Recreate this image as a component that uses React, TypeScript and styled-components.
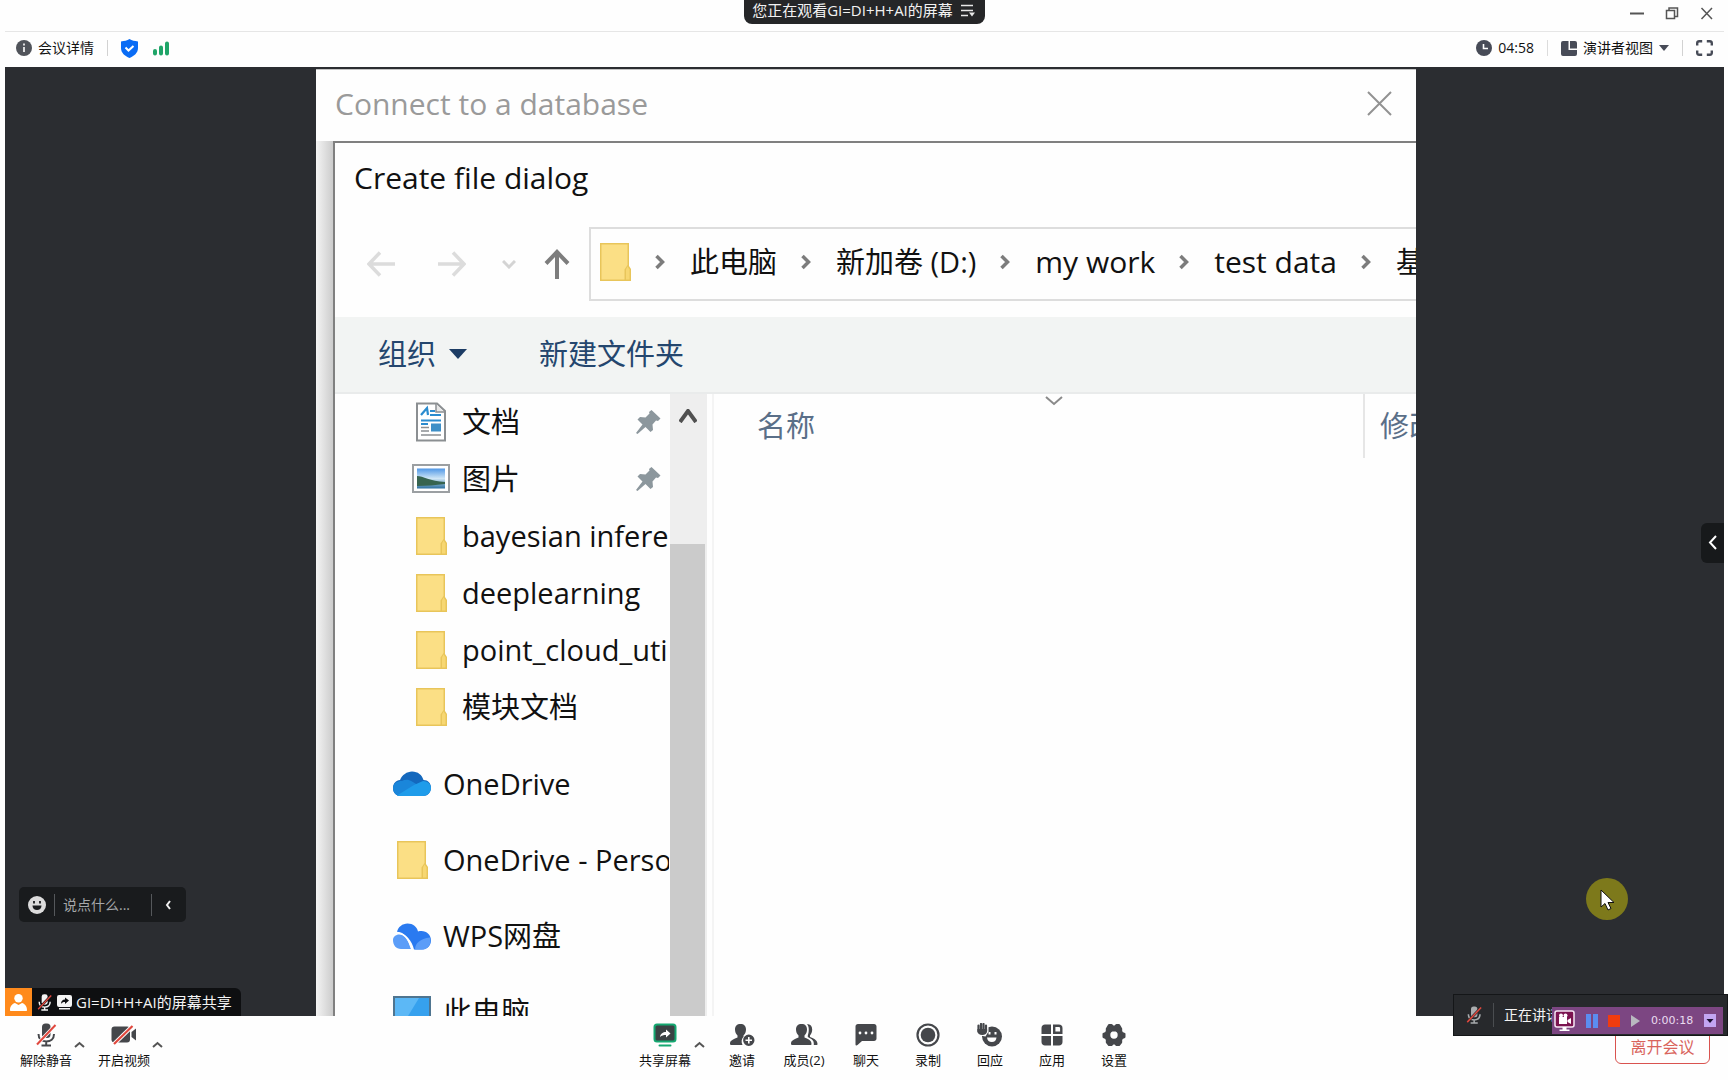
import React from "react";
import styled, { createGlobalStyle } from "styled-components";

const GlobalStyle = createGlobalStyle`
  * { box-sizing: border-box; }
  body {
    margin: 0;
    background: #fefefe;
    color: #111;
    font: 14px/20px "Open Sans", "Noto Sans CJK SC", sans-serif;
  }
  button, input {
    font: inherit;
    color: inherit;
    background: none;
    border: 0;
    padding: 0;
    margin: 0;
  }
  svg { display: block; flex: none; }
  ul { list-style: none; margin: 0; padding: 0; }
`;

/* ---------- shell ---------- */

const Page = styled.div`
  position: relative;
  display: flex;
  flex-direction: column;
  height: 100vh;
  padding: 0 4px 0 5px;
  overflow: hidden;
`;

const TitleBar = styled.header`
  display: grid;
  grid-template-columns: 1fr auto 1fr;
  align-items: start;
  height: 32px;
  border-bottom: 1px solid #e6e6e6;
`;

const WatchingPill = styled.button`
  grid-column: 2;
  display: flex;
  align-items: center;
  gap: 8px;
  height: 24px;
  padding: 0 10px 4px 8px;
  border-radius: 0 0 8px 8px;
  background: #252628;
  color: #f2f2f2;
  font-size: 15px;
  white-space: nowrap;
`;

const WindowControls = styled.div`
  display: flex;
  justify-content: flex-end;
  gap: 21px;
  padding: 6px 10px 0 0;
`;

const IconButton = styled.button`
  display: flex;
  align-items: center;
  justify-content: center;
`;

const InfoBar = styled.nav`
  display: flex;
  justify-content: space-between;
  align-items: center;
  height: 35px;
  padding: 0 11px 3px;
`;

const BarGroup = styled.div<{ $gap: number }>`
  display: flex;
  align-items: center;
  gap: ${(p) => p.$gap}px;
`;

const BarButton = styled.button`
  display: flex;
  align-items: center;
  gap: 6px;
`;

const Divider = styled.span<{ $color: string; $height: number }>`
  flex: none;
  width: 1px;
  height: ${(p) => p.$height}px;
  background: ${(p) => p.$color};
`;

/* ---------- stage ---------- */

const Stage = styled.main`
  position: relative;
  flex: 1;
  min-height: 0;
  display: grid;
  grid-template-columns: 311fr 1100fr 308fr;
  grid-template-rows: minmax(0, 1fr);
  padding-top: 2px;
  background: #2b2d31;
`;

const SharedScreen = styled.section`
  grid-column: 2;
  display: flex;
  flex-direction: column;
  min-width: 0;
  overflow: hidden;
  background: #fefefe;
  border-top: 1px solid #c4c4c4;
  font-size: 29px;
  line-height: 40px;
  white-space: nowrap;
`;

const ConnectHeader = styled.div`
  display: flex;
  flex: none;
  align-items: center;
  justify-content: space-between;
  height: 71px;
  padding: 0 24px 4px 19px;
  color: #9a9a9a;
  font-size: 30px;
`;

const DialogFrame = styled.div`
  flex: 1;
  min-height: 0;
  padding-left: 17px;
  display: flex;
  background: linear-gradient(to right, #f4f4f4, #cccccc 17px);
`;

const FileDialog = styled.div`
  flex: 1;
  min-width: 0;
  display: flex;
  flex-direction: column;
  background: #fefefe;
  border: solid #808080;
  border-width: 2px 0 0 2px;
`;

const DialogTitle = styled.h1`
  flex: none;
  margin: 0;
  padding: 15px 19px 0;
  height: 84px;
  font-size: 30px;
  line-height: 40px;
  font-weight: 400;
`;

const NavRow = styled.div`
  display: flex;
  flex: none;
  height: 74px;
  padding-left: 32px;
`;

const NavButtons = styled.div`
  display: grid;
  grid-template-columns: 71px 64px 42px 45px;
  flex: none;
`;

const NavButton = styled.button`
  display: flex;
  align-items: center;
`;

const AddressBar = styled.div`
  flex: 1;
  display: flex;
  align-items: center;
  gap: 24px;
  min-width: 0;
  overflow: hidden;
  padding: 0 0 4px 8px;
  border: solid #dddddd;
  border-width: 2px 0 2px 2px;
`;

const Crumb = styled.button<{ $latin: boolean }>`
  flex: none;
  font-size: ${(p) => (p.$latin ? 30 : 29)}px;
`;

const CommandBar = styled.div`
  display: flex;
  flex: none;
  align-items: center;
  gap: 72px;
  height: 77px;
  margin-top: 16px;
  padding: 0 0 2px 43px;
  background: #f2f4f3;
  border-bottom: 2px solid #e9ebeb;
  color: #24466e;
`;

const Command = styled.button`
  display: flex;
  align-items: center;
  gap: 13px;
`;

const DialogBody = styled.div`
  flex: 1;
  min-height: 0;
  display: grid;
  grid-template-columns: 335px 37px minmax(0, 1fr);
  grid-template-rows: minmax(0, 1fr);
`;

const FolderTree = styled.div`
  overflow: hidden;
  padding-right: 1px;
`;

const TreeGroup = styled.ul<{ $indent: number; $row: number }>`
  padding-left: ${(p) => p.$indent}px;
  & + & { margin-top: 11px; }
  li {
    display: grid;
    grid-template-columns: 40px minmax(0, 1fr) auto;
    align-items: center;
    height: ${(p) => p.$row}px;
    padding-bottom: 2px;
  }
  li > svg { justify-self: center; }
`;

const TreeLabel = styled.button`
  overflow: hidden;
  padding-left: 11px;
  text-align: left;
`;

const PinSlot = styled.span`
  padding-right: 8px;
`;

const ScrollTrack = styled.div`
  display: flex;
  flex-direction: column;
  align-items: center;
  padding-right: 2px;
  background: #eeeeee;
`;

const ScrollUp = styled(IconButton)`
  height: 44px;
  margin-bottom: 106px;
`;

const ScrollThumb = styled.div`
  flex: 1;
  align-self: stretch;
  background: #cbcbcb;
`;

const FilePane = styled.div`
  margin-left: 5px;
  border-left: 2px solid #f4f4f4;
  overflow: hidden;
`;

const FileTable = styled.table`
  table-layout: fixed;
  width: 100%;
  border-collapse: collapse;
  color: #5a6f88;
  th {
    position: relative;
    height: 64px;
    padding: 0 0 0 43px;
    font-weight: 400;
    text-align: left;
    overflow: hidden;
  }
  th + th {
    width: 52px;
    padding-left: 15px;
    border-left: 2px solid #e6e6e6;
  }
`;

const SortMark = styled.span`
  position: absolute;
  top: 2px;
  left: 51%;
`;

/* ---------- overlays on the stage ---------- */

const CommentBox = styled.div`
  position: absolute;
  left: 14px;
  bottom: 94px;
  display: flex;
  align-items: center;
  width: 167px;
  height: 35px;
  padding: 0 15px 0 9px;
  gap: 8px;
  border-radius: 5px;
  background: #191b1d;
  color: #a6a8aa;
  input {
    flex: 1;
    min-width: 0;
    outline: 0;
  }
  input::placeholder { color: #a6a8aa; opacity: 1; }
  button { padding-left: 5px; }
`;

const ShareTag = styled.div`
  position: absolute;
  left: 0;
  bottom: 0;
  display: flex;
  align-items: center;
  gap: 4px;
  height: 28px;
  padding-right: 9px;
  border-radius: 0 6px 0 0;
  overflow: hidden;
  background: #0e0f11;
  color: #f4f4f4;
  font-size: 15px;
  white-space: nowrap;
`;

const Avatar = styled.span`
  display: flex;
  align-items: center;
  justify-content: center;
  width: 27px;
  height: 28px;
  background: #ff8a1c;
`;

const PanelHandle = styled(IconButton)`
  position: absolute;
  right: 0;
  top: 48%;
  width: 23px;
  height: 40px;
  border-radius: 6px 0 0 6px;
  background: #17191b;
`;

const Pointer = styled.div`
  position: absolute;
  right: 96px;
  bottom: 96px;
  display: flex;
  width: 42px;
  height: 42px;
  padding: 11px 0 0 14px;
  border-radius: 50%;
  background: #7d791b;
`;

/* ---------- bottom bar ---------- */

const BottomBar = styled.footer`
  flex: none;
  display: grid;
  grid-template-columns: 631fr auto 579fr;
  height: 64px;
  font-size: 13px;
  line-height: 18px;
`;

const ToolGroup = styled.div<{ $pad: number }>`
  display: flex;
  align-items: flex-start;
  padding: 7px 0 0 ${(p) => p.$pad}px;
`;

const Tool = styled.button<{ $width: number }>`
  display: flex;
  flex-direction: column;
  align-items: center;
  gap: 4px;
  width: ${(p) => p.$width}px;
  color: #111;
  white-space: nowrap;
`;

const Caret = styled(IconButton)<{ $after: number }>`
  height: 24px;
  margin: 9px ${(p) => p.$after}px 0 0;
`;

const LeaveSlot = styled.div`
  display: flex;
  justify-content: flex-end;
  align-items: flex-start;
  padding: 14px 14px 0 0;
`;

const LeaveButton = styled.button`
  height: 34px;
  width: 95px;
  border: 1px solid #d9534f;
  border-radius: 6px;
  color: #d9645c;
  font-size: 16px;
`;

const SpeakerBar = styled.aside`
  position: absolute;
  right: 0;
  bottom: 44px;
  display: flex;
  align-items: center;
  gap: 10px;
  width: 275px;
  height: 42px;
  padding: 0 4px 0 11px;
  border: 1px solid #141618;
  background: #27292c;
  color: #f4f4f4;
`;

const SpeakerText = styled.span`
  flex: 1;
  min-width: 0;
  overflow: hidden;
  white-space: nowrap;
`;

const Recorder = styled.div`
  display: flex;
  align-items: center;
  justify-content: space-between;
  width: 171px;
  height: 27px;
  margin: 11px 0 0 -10px;
  padding: 0 7px 0 2px;
  background: #7c4682;
  color: #eadcf0;
  font: 11px/16px "DejaVu Sans", sans-serif;
`;

/* ---------- icons ---------- */

const INK = "#45474b";

const Folder = () => (
  <svg width="32" height="40" viewBox="0 0 32 40">
    <path d="M1 1h29v23l2 3v12H1z" fill="#e8c55a" />
    <path d="M2.500 2.500h26V23l-3 4.500v10h-23z" fill="#fbdf85" />
    <path d="M27 27.500l1.500-3 2 3v10H27z" fill="#f7d772" />
  </svg>
);

const DocIcon = () => (
  <svg width="30" height="40" viewBox="0 0 30 40">
    <path d="M1 1.500h20l8 7.500v29.500H1z" fill="#fff" stroke="#8b8f92" strokeWidth="2" />
    <path d="M20 2v8h8" fill="#e8e8e8" stroke="#8b8f92" strokeWidth="1.500" />
    <path d="M5 13l6-7 1 7M14 9h5M14 13h11M5 18.500h20M5 22h7" stroke="#2b8ccf" strokeWidth="2.200" fill="none" />
    <path d="M15 21.500h10v8H15z" fill="#3d8fc7" />
    <path d="M5 25.500h8M5 29h8M5 33h20" stroke="#8b8f92" strokeWidth="1.500" />
  </svg>
);

const PictureIcon = () => (
  <svg width="38" height="29" viewBox="0 0 38 29">
    <defs>
      <linearGradient id="sky" x1="0" y1="0" x2="0" y2="1">
        <stop offset="0" stopColor="#4f97e6" />
        <stop offset="0.500" stopColor="#cfe6f6" />
        <stop offset="1" stopColor="#2c6f9e" />
      </linearGradient>
    </defs>
    <path d="M1 1h36v27H1z" fill="#fff" stroke="#9b9fa2" strokeWidth="2" />
    <path d="M5 4.500h28v20H5z" fill="url(#sky)" />
    <path d="M5 12c6 0 13 5 28 6v2c-10 1-18 2-28 2z" fill="#37644f" />
  </svg>
);

const Pin = () => (
  <svg width="25" height="25" viewBox="0 0 25 25" fill="#8c979d">
    <path d="M15.500 1l9 8.500-2.500 2.500-2-.5-3.500 4 .5 5.500-2.500 2-5-5L1.500 25 0 24l6.500-8.500-5-5 2.500-2.500 5.500.5 4-4-.5-1.500z" />
  </svg>
);

const OneDriveCloud = () => (
  <svg width="38" height="26" viewBox="0 0 38 26">
    <path d="M8 25C3 25 0 21.500 0 17S3 9.500 7 9c2-5 7-8.500 12-8.500 6 0 10 3.500 11.500 8.500 4.500 0 7.500 3.500 7.500 7.500 0 5-3.500 8.500-8 8.500z" fill="#1468bd" />
    <path d="M9 10c3-2 7-1.500 10 .5l11 6.500-6 8H8C3 25 0 21.500 0 17S4 10 9 10z" fill="#1a86da" />
    <path d="M4 24.500L21 14l9-4c4.500 0 8 3 8 7s-3.500 8-8 8H9c-2 0-4 0-5-.5z" fill="#1f9cea" />
  </svg>
);

const WpsCloud = () => (
  <svg width="38" height="27" viewBox="0 0 38 27">
    <path d="M4 9C5 4 9.500.5 14.500.5 20 .5 24 4 25 8.500c7-2 13 2.500 13 9 0 5-4 9-9 9h-8C19 18 13 10 4 9z" fill="#2a7af0" />
    <path d="M0 17c0-5 7-8 12-3 3 3 4 7 6 12H8c-5 0-8-4-8-9z" fill="#5b9df8" />
    <path d="M22 26.500c0-6 5-11 15-12 2 6-2 12-8 12z" fill="#5b9df8" />
    <path d="M3 9.500c8 0 13 6 16 17" fill="none" stroke="#fff" strokeWidth="1.500" />
  </svg>
);

const Monitor = () => (
  <svg width="38" height="32" viewBox="0 0 38 32">
    <path d="M1 1h36v25H1z" fill="#36a1ee" stroke="#4f7590" strokeWidth="2" />
    <path d="M2 2h24L12 25H2z" fill="#5cb8f6" />
    <path d="M10 29h18v2H10z" fill="#6d8290" />
  </svg>
);

const CrumbChevron = () => (
  <svg width="11" height="16" viewBox="0 0 11 16" fill="none" stroke="#7c7c7c" strokeWidth="3.500">
    <path d="M1.500 2L7.500 8l-6 6" />
  </svg>
);

const Arrow = ({ left }: { left?: boolean }) => (
  <svg width="28" height="26" viewBox="0 0 28 26" fill="none" stroke="#dcdcdc" strokeWidth="3.500">
    {left ? <path d="M28 13H2M13 1.500L2 13l11 11.500" /> : <path d="M0 13h26M15 1.500L26 13 15 24.500" />}
  </svg>
);

const Chevron = ({ dir, w, h, color, stroke = 2 }: { dir: "up" | "down" | "left"; w: number; h: number; color: string; stroke?: number }) => {
  const d =
    dir === "up"
      ? `M1 ${h - 1}L${w / 2} 2L${w - 1} ${h - 1}`
      : dir === "down"
        ? `M1 1L${w / 2} ${h - 2}L${w - 1} 1`
        : `M${w - 1} 1L2 ${h / 2}L${w - 1} ${h - 1}`;
  return (
    <svg width={w} height={h} viewBox={`0 0 ${w} ${h}`} fill="none" stroke={color} strokeWidth={stroke}>
      <path d={d} />
    </svg>
  );
};

const Triangle = ({ w, h, color }: { w: number; h: number; color: string }) => (
  <svg width={w} height={h} viewBox={`0 0 ${w} ${h}`}>
    <path d={`M0 0h${w}L${w / 2} ${h}z`} fill={color} />
  </svg>
);

const MicOff = ({ size, color, halo }: { size: number; color: string; halo: string }) => (
  <svg width={size} height={size} viewBox="0 0 24 24" fill="none">
    <rect x="8" y="0.500" width="8.500" height="14.500" rx="3.500" fill={color} />
    <path d="M4.500 11c0 5 3.500 7.500 7.700 7.500S20 16 20 11M12.200 18.500V22M7.500 22.500h9.500" stroke={color} strokeWidth="2" />
    <path d="M3 21.500L21.500 2" stroke={halo} strokeWidth="3.500" />
    <path d="M3 21.500L21.500 2" stroke="#e0483e" strokeWidth="2" />
  </svg>
);

const CameraOff = () => (
  <svg width="26" height="24" viewBox="0 0 26 24" fill="none">
    <rect x="0.500" y="3.500" width="18.500" height="16" rx="3" fill={INK} />
    <path d="M20.500 9l4.500-3.500v12L20.500 14z" fill={INK} />
    <path d="M3 21L21.500 3" stroke="#fff" strokeWidth="4" />
    <path d="M3 21L21.500 3" stroke="#e0483e" strokeWidth="2.200" />
  </svg>
);

const ShareScreen = () => (
  <svg width="24" height="24" viewBox="0 0 24 24">
    <rect x="1.500" y="1.500" width="21" height="17" rx="2.500" fill="#3b4244" stroke="#14a871" strokeWidth="2" />
    <path d="M7 14c.5-3.500 3-5 6-5V6.500l4.500 4-4.500 4V12c-2.500 0-4.500.5-6 2z" fill="#fff" />
    <path d="M6.500 22.500h11" stroke="#14a871" strokeWidth="2" strokeLinecap="round" />
  </svg>
);

const Invite = () => (
  <svg width="25" height="24" viewBox="0 0 25 24" fill={INK}>
    <path d="M10.500 1c3.500 0 5.500 2 5.500 5.500 0 2.500-1 4.500-2.500 6v1.200c-2 2-2.500 5.500-1 8.300H1c-.8 0-1-.6-1-1.200 0-3 2-4 7.500-6.300v-2C6 11 5 9 5 6.500 5 3 7 1 10.500 1z" />
    <path d="M18.800 11.500a5.700 5.700 0 100 11.400 5.700 5.700 0 000-11.400zm-.8 2.500h1.600v2.400H22V18h-2.400v2.500H18V18h-2.500v-1.600H18z" fillRule="evenodd" />
  </svg>
);

const Members = () => (
  <svg width="27" height="24" viewBox="0 0 27 24" fill={INK}>
    <path d="M10.500 1c3.700 0 5.500 2 5.500 5.500 0 2.500-1 4.500-2.500 6v2c5.500 2.300 7 3.500 7 6.500 0 .6-.2 1-1 1H1c-.8 0-1-.6-1-1.200 0-3 2-4 7.500-6.300v-2C6 11 5 9 5 6.500 5 3 7 1 10.500 1z" />
    <path d="M16 1c3.500.2 5.200 2.200 5.200 5.500 0 2.500-1 4.500-2.200 6v1.500c5.500 2 7.500 4 7.500 7 0 .6-.2 1-1 1h-2.700c.3-4-1-5.500-6-8v-1.500C18 9 18.500 4 16 1z" />
  </svg>
);

const Chat = () => (
  <svg width="22" height="24" viewBox="0 0 22 24">
    <path d="M3 1h16c1.500 0 2.500 1 2.500 2.500v12c0 1.500-1 2.500-2.500 2.500H7l-4.500 4c-1 .8-2 .5-2-.8V3.500C.5 2 1.500 1 3 1z" fill={INK} />
    <g fill="#fff"><circle cx="5" cy="10" r="1.400" /><circle cx="11" cy="10" r="1.400" /><circle cx="17" cy="10" r="1.400" /></g>
  </svg>
);

const Record = () => (
  <svg width="24" height="24" viewBox="0 0 24 24">
    <circle cx="12" cy="12" r="10.500" fill="none" stroke={INK} strokeWidth="2.200" />
    <circle cx="12" cy="12" r="7.300" fill={INK} />
  </svg>
);

const Reaction = () => (
  <svg width="26" height="24" viewBox="0 0 26 24">
    <circle cx="15" cy="13.500" r="10" fill={INK} />
    <path d="M0 0h11.500v8.500L8.500 13.500 3 12.500 0 8z" fill="#fff" />
    <path d="M1.500 2.500v6M4 1v7M6.500 1V8M9 2.500V8" stroke={INK} strokeWidth="2.200" strokeLinecap="round" />
    <path d="M.4 6h9.700v2c0 2.500-2 4-4.800 4S.4 10.500.4 8z" fill={INK} />
    <path d="M10 14.500h9.500c-.3 3-2 4.500-4.700 4.500S10.300 17.500 10 14.500z" fill="#fff" />
    <path d="M12.500 9v2.500M18.500 9v2.500" stroke="#fff" strokeWidth="2" />
  </svg>
);

const Apps = () => (
  <svg width="22" height="24" viewBox="0 0 22 24" fill={INK}>
    <path d="M4 1.500h6v9.500H.5V5C.5 3 2 1.500 4 1.500zM.5 13H10v9.500H4c-2 0-3.500-1.500-3.500-3.500zM12 13h9.500v6c0 2-1.500 3.500-3.500 3.500h-6z" />
    <path d="M13.200 2.700h4.600c1.400 0 2.500 1.100 2.500 2.500v4.600h-7.100z" fill="none" stroke={INK} strokeWidth="2.400" />
  </svg>
);

const Gear = () => (
  <svg width="24" height="24" viewBox="0 0 24 24" fill={INK}>
    <path
      fillRule="evenodd"
      stroke={INK}
      strokeWidth="2"
      strokeLinejoin="round"
      d="M7 2h2.500L11 3.500h2L14.500 2H17l2.200 3.700v2.600l1 1.700 2.300 1v3L20.200 15l-1 1.700v2.600L17 22h-2.500L13 20.500h-2L9.500 22H7l-2.200-2.700v-2.600l-1-1.700-2.300-1v-3l2.300-1 1-1.700V5.700zM12 7.300a4.700 4.700 0 100 9.400 4.700 4.700 0 000-9.400z"
    />
  </svg>
);

const tools: { label: string; icon: React.ReactNode }[] = [
  { label: "邀请", icon: <Invite /> },
  { label: "成员(2)", icon: <Members /> },
  { label: "聊天", icon: <Chat /> },
  { label: "录制", icon: <Record /> },
  { label: "回应", icon: <Reaction /> },
  { label: "应用", icon: <Apps /> },
  { label: "设置", icon: <Gear /> },
];

const quickAccess: { label: string; icon: React.ReactNode; pinned?: boolean }[] = [
  { label: "文档", icon: <DocIcon />, pinned: true },
  { label: "图片", icon: <PictureIcon />, pinned: true },
  { label: "bayesian infere", icon: <Folder /> },
  { label: "deeplearning", icon: <Folder /> },
  { label: "point_cloud_uti", icon: <Folder /> },
  { label: "模块文档", icon: <Folder /> },
];

const drives: { label: string; icon: React.ReactNode }[] = [
  { label: "OneDrive", icon: <OneDriveCloud /> },
  { label: "OneDrive - Perso", icon: <Folder /> },
  { label: "WPS网盘", icon: <WpsCloud /> },
  { label: "此电脑", icon: <Monitor /> },
];

const crumbs = [
  { label: "此电脑" },
  { label: "新加卷 (D:)" },
  { label: "my work", latin: true },
  { label: "test data", latin: true },
  { label: "基" },
];

export default function App() {
  return (
    <>
      <GlobalStyle />
      <Page>
        <TitleBar>
          <WatchingPill>
            您正在观看GI=DI+H+AI的屏幕
            <svg width="14" height="13" viewBox="0 0 14 13" stroke="#e8e8e8" strokeWidth="1.500">
              <path d="M0 1.500h12M0 6.500h12M0 11.500h7" />
              <path d="M8 8.500h6l-3 4z" fill="#e8e8e8" stroke="none" />
            </svg>
          </WatchingPill>
          <WindowControls>
            <IconButton aria-label="最小化">
              <svg width="14" height="14" viewBox="0 0 14 14"><path d="M0 7.500h14" stroke="#555" strokeWidth="2" /></svg>
            </IconButton>
            <IconButton aria-label="还原">
              <svg width="14" height="14" viewBox="0 0 14 14" fill="none" stroke="#555" strokeWidth="1.500">
                <path d="M1.500 4.500h8v8h-8zM4 4V2h8.500v8.500H10" />
              </svg>
            </IconButton>
            <IconButton aria-label="关闭">
              <svg width="14" height="14" viewBox="0 0 14 14"><path d="M1.500 2l10.500 11M12 2L1.500 13" stroke="#555" strokeWidth="1.500" /></svg>
            </IconButton>
          </WindowControls>
        </TitleBar>

        <InfoBar>
          <BarGroup $gap={13}>
            <BarButton>
              <svg width="16" height="16" viewBox="0 0 16 16">
                <circle cx="8" cy="8" r="8" fill="#50535a" />
                <path d="M8 3.500v2M8 7v5" stroke="#fff" strokeWidth="1.600" />
              </svg>
              会议详情
            </BarButton>
            <Divider $color="#d2d2d2" $height={16} />
            <IconButton aria-label="安全">
              <svg width="17" height="19" viewBox="0 0 17 19">
                <path d="M8.500 0c2.500 1.500 5 2 8.500 2.500V9c0 5-4 8-8.500 10C4 17 0 14 0 9V2.500C3.500 2 6 1.500 8.500 0z" fill="#0a6cf5" />
                <path d="M4.500 8.500l3 3 5-4.500" fill="none" stroke="#fff" strokeWidth="2" />
              </svg>
            </IconButton>
            <IconButton aria-label="网络">
              <svg width="19" height="15" viewBox="0 0 19 15" stroke="#1fa568" strokeWidth="4" strokeLinecap="round">
                <path d="M4 10v2.500M10 6.500v6M16 2.500v10" />
              </svg>
            </IconButton>
          </BarGroup>
          <BarGroup $gap={13}>
            <BarButton>
              <svg width="16" height="16" viewBox="0 0 16 16">
                <circle cx="8" cy="8" r="8" fill="#474b57" />
                <path d="M7.500 4v4.500H12" stroke="#fff" strokeWidth="1.600" fill="none" />
              </svg>
              04:58
            </BarButton>
            <Divider $color="#dcdcdc" $height={16} />
            <BarButton>
              <svg width="16" height="15" viewBox="0 0 16 15" fill="#474b57">
                <path d="M2 0h5.500v9H16v4a2 2 0 01-2 2H2a2 2 0 01-2-2V2a2 2 0 012-2zM9 0h5a2 2 0 012 2v5.500H9z" />
              </svg>
              演讲者视图
              <Triangle w={10} h={6} color="#474b57" />
            </BarButton>
            <Divider $color="#d2d2d2" $height={16} />
            <IconButton aria-label="全屏">
              <svg width="17" height="16" viewBox="0 0 17 16" fill="none" stroke="#474b57" strokeWidth="2.400">
                <path d="M1.200 5.500V3a2 2 0 012-1.800h3M10.800 1.200h3a2 2 0 012 1.800v2.500M15.800 10.500V13a2 2 0 01-2 1.800h-3M6.200 14.800h-3a2 2 0 01-2-1.800v-2.500" />
              </svg>
            </IconButton>
          </BarGroup>
        </InfoBar>

        <Stage>
          <SharedScreen>
            <ConnectHeader>
              Connect to a database
              <IconButton aria-label="Close">
                <svg width="25" height="25" viewBox="0 0 25 25"><path d="M1 1l23 23M24 1L1 24" stroke="#929292" strokeWidth="2" /></svg>
              </IconButton>
            </ConnectHeader>
            <DialogFrame>
              <FileDialog>
                <DialogTitle>Create file dialog</DialogTitle>
                <NavRow>
                  <NavButtons>
                    <NavButton aria-label="后退"><Arrow left /></NavButton>
                    <NavButton aria-label="前进"><Arrow /></NavButton>
                    <NavButton aria-label="最近"><Chevron dir="down" w={14} h={9} color="#d4d4d4" stroke={3} /></NavButton>
                    <NavButton aria-label="上移">
                      <svg width="26" height="30" viewBox="0 0 26 30" fill="none" stroke="#7d7d7d" strokeWidth="4"><path d="M13 30V3M2 14.500L13 3l11 11.500" /></svg>
                    </NavButton>
                  </NavButtons>
                  <AddressBar>
                    <Folder />
                    {crumbs.map((c) => (
                      <React.Fragment key={c.label}>
                        <CrumbChevron />
                        <Crumb $latin={!!c.latin}>{c.label}</Crumb>
                      </React.Fragment>
                    ))}
                  </AddressBar>
                </NavRow>
                <CommandBar>
                  <Command>组织<Triangle w={18} h={10} color="#1d3c64" /></Command>
                  <Command>新建文件夹</Command>
                </CommandBar>
                <DialogBody>
                  <FolderTree>
                    <TreeGroup $indent={76} $row={57}>
                      {quickAccess.map((f) => (
                        <li key={f.label}>
                          {f.icon}
                          <TreeLabel>{f.label}</TreeLabel>
                          {f.pinned && <PinSlot><Pin /></PinSlot>}
                        </li>
                      ))}
                    </TreeGroup>
                    <TreeGroup $indent={57} $row={76}>
                      {drives.map((f) => (
                        <li key={f.label}>
                          {f.icon}
                          <TreeLabel>{f.label}</TreeLabel>
                        </li>
                      ))}
                    </TreeGroup>
                  </FolderTree>
                  <ScrollTrack>
                    <ScrollUp aria-label="向上滚动"><Chevron dir="up" w={18} h={14} color="#505050" stroke={4} /></ScrollUp>
                    <ScrollThumb />
                  </ScrollTrack>
                  <FilePane>
                    <FileTable>
                      <thead>
                        <tr>
                          <th>名称<SortMark><Chevron dir="down" w={18} h={10} color="#8a8a8a" /></SortMark></th>
                          <th>修改</th>
                        </tr>
                      </thead>
                    </FileTable>
                  </FilePane>
                </DialogBody>
              </FileDialog>
            </DialogFrame>
          </SharedScreen>

          <CommentBox>
            <svg width="18" height="18" viewBox="0 0 18 18">
              <circle cx="9" cy="9" r="9" fill="#dcdcdc" />
              <path d="M4.500 9.500h9c0 3-2 4.500-4.500 4.500s-4.500-1.500-4.500-4.500z" fill="#191b1d" />
              <path d="M6 5v2.500M12 5v2.500" stroke="#191b1d" strokeWidth="1.800" />
            </svg>
            <Divider $color="#55585b" $height={22} />
            <input aria-label="说点什么" placeholder="说点什么..." />
            <Divider $color="#55585b" $height={22} />
            <button aria-label="收起"><Chevron dir="left" w={6} h={10} color="#f0f0f0" /></button>
          </CommentBox>

          <ShareTag>
            <Avatar>
              <svg width="17" height="17" viewBox="0 0 17 17" fill="#fff">
                <circle cx="8.500" cy="4.200" r="4.200" />
                <path d="M1 17c-.7 0-1-.4-1-1 0-4 2.500-6.500 5-7l3.500 2L12 9c2.500.5 5 3 5 7 0 .6-.3 1-1 1z" />
              </svg>
            </Avatar>
            <MicOff size={17} color="#f4f4f4" halo="#0e0f11" />
            <svg width="15" height="15" viewBox="0 0 15 15" fill="#f4f4f4">
              <path fillRule="evenodd" d="M2 0h11a2 2 0 012 2v8a2 2 0 01-2 2H2a2 2 0 01-2-2V2a2 2 0 012-2zm2 9c1-1.500 2-2 4-2v2l4-3.500L8 2.500v2C5.500 4.500 4 6 4 9zM2 13h11v1.500H2z" />
            </svg>
            GI=DI+H+AI的屏幕共享
          </ShareTag>

          <PanelHandle aria-label="展开侧栏"><Chevron dir="left" w={9} h={15} color="#fff" /></PanelHandle>

          <Pointer>
            <svg width="15" height="22" viewBox="0 0 15 22">
              <path d="M1 1v17l4-3.500 3 6.500 3-1.500-3-6h6z" fill="#fff" stroke="#111" />
            </svg>
          </Pointer>
        </Stage>

        <BottomBar>
          <ToolGroup $pad={13}>
            <Tool $width={56}><MicOff size={24} color={INK} halo="#fefefe" />解除静音</Tool>
            <Caret $after={11} aria-label="音频选项"><Chevron dir="up" w={11} h={7} color="#555" /></Caret>
            <Tool $width={56}><CameraOff />开启视频</Tool>
            <Caret $after={0} aria-label="视频选项"><Chevron dir="up" w={11} h={7} color="#555" /></Caret>
          </ToolGroup>
          <ToolGroup $pad={0}>
            <Tool $width={58}><ShareScreen />共享屏幕</Tool>
            <Caret $after={6} aria-label="共享选项"><Chevron dir="up" w={11} h={7} color="#555" /></Caret>
            {tools.map((t) => (
              <Tool key={t.label} $width={62}>{t.icon}{t.label}</Tool>
            ))}
          </ToolGroup>
          <LeaveSlot><LeaveButton>离开会议</LeaveButton></LeaveSlot>
        </BottomBar>

        <SpeakerBar>
          <MicOff size={18} color="#a9acae" halo="#27292c" />
          <Divider $color="#4a4d50" $height={24} />
          <SpeakerText>正在讲话</SpeakerText>
          <Recorder>
            <svg width="21" height="23" viewBox="0 0 21 23">
              <rect x="1" y="2" width="19" height="16" rx="2" fill="#7b1450" stroke="#f6e8f4" strokeWidth="1.500" />
              <path d="M5 8h8v7H5zM13.500 11l3.500-2v6l-3.500-2z" fill="#fff" />
              <circle cx="7" cy="6.500" r="2" fill="#fff" /><circle cx="11.500" cy="6.500" r="2" fill="#fff" />
              <path d="M8.500 18h4v2.500h3V22h-10v-1.500h3z" fill="#fff" />
            </svg>
            <svg width="12" height="14" viewBox="0 0 12 14" fill="#5b8df0"><path d="M0 0h5v14H0zM7 0h5v14H7z" /></svg>
            <svg width="12" height="12" viewBox="0 0 12 12"><path d="M0 0h12v12H0z" fill="#f03c10" /></svg>
            <svg width="9" height="12" viewBox="0 0 9 12"><path d="M0 0l9 6-9 6z" fill="#b9b9c0" /></svg>
            0:00:18
            <svg width="12" height="13" viewBox="0 0 12 13">
              <path d="M0 0h12v13H0z" fill="#c3a5f2" />
              <path d="M2.500 5h7L6 9z" fill="#1a1030" />
            </svg>
          </Recorder>
        </SpeakerBar>
      </Page>
    </>
  );
}
